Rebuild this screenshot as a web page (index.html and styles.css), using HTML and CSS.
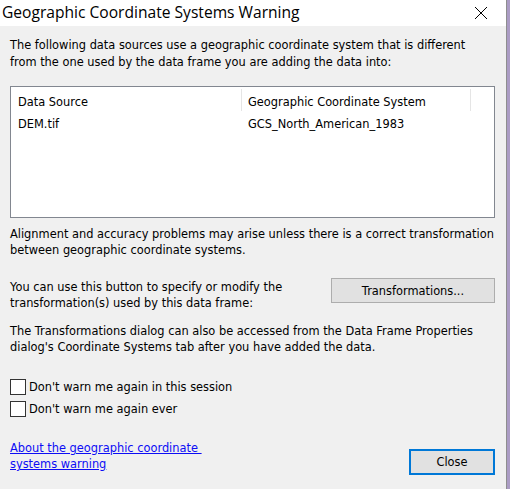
FILE: index.html
```html
<!DOCTYPE html>
<html>
<head>
<meta charset="utf-8">
<link rel="stylesheet" href="styles.css">
</head>
<body>
<div class="window">
  <div class="titlebar">
    <span class="title">Geographic Coordinate Systems Warning</span>
    <svg class="close-x" width="14" height="14" viewBox="0 0 14 14"><path d="M1 1L13 13M13 1L1 13" stroke="#000" stroke-width="1" fill="none"/></svg>
  </div>
  <div class="content">
    <p class="intro">The following data sources use a geographic coordinate system that is different<br>from the one used by the data frame you are adding the data into:</p>
    <div class="listbox">
      <div class="header">
        <div class="col col1">Data Source</div>
        <div class="col col2">Geographic Coordinate System</div>
        <div class="col col3"></div>
      </div>
      <div class="row">
        <div class="col col1">DEM.tif</div>
        <div class="col col2">GCS_North_American_1983</div>
      </div>
    </div>
    <p class="para2">Alignment and accuracy problems may arise unless there is a correct transformation<br>between geographic coordinate systems.</p>
    <div class="transform-row">
      <p>You can use this button to specify or modify the<br>transformation(s) used by this data frame:</p>
      <button class="btn btn-transform">Transformations...</button>
    </div>
    <p class="para4">The Transformations dialog can also be accessed from the Data Frame Properties<br>dialog's Coordinate Systems tab after you have added the data.</p>
    <div class="checks">
      <label class="check"><span class="box"></span>Don't warn me again in this session</label>
      <label class="check"><span class="box"></span>Don't warn me again ever</label>
    </div>
    <div class="footer">
      <a class="link" href="#">About the geographic coordinate&nbsp;<br>systems warning</a>
      <button class="btn btn-close">Close</button>
    </div>
  </div>
</div>
</body>
</html>
```
FILE: styles.css
```css
html, body {
  margin: 0;
  padding: 0;
  background: #ab9cc4;
}
.window {
  width: 506px;
  height: 489px;
  background: #f0f0f0;
  border-right: 1px solid #8e8e8e;
  font-family: Tahoma, "DejaVu Sans", sans-serif;
  font-size: 11.4px;
  color: #000;
  overflow: hidden;
}
.titlebar {
  height: 26px;
  background: #fff;
  display: flex;
  align-items: center;
  justify-content: space-between;
  padding: 0 18px 3px 2px;
  box-sizing: border-box;
}
.title {
  font-family: "Open Sans", "Noto Sans", sans-serif;
  font-size: 15.6px;
  color: #000;
}
.close-x {
  display: block;
  margin-top: 2px;
}
.content {
  padding: 0 11px 0 10px;
}
p {
  margin: 0;
  line-height: 16px;
}
.intro {
  padding-top: 11px;
  line-height: 17px;
}
.listbox {
  margin-top: 15px;
  height: 130px;
  border: 1px solid #828790;
  background: #fff;
}
.header, .row {
  display: flex;
}
.header {
  height: 24px;
  padding-top: 2px;
}
.header .col {
  border-right: 1px solid #e5e5e5;
  line-height: 22px;
  padding-top: 2px;
  height: 20px;
}
.col1 {
  width: 223px;
  padding-left: 7px;
}
.col2 {
  width: 222px;
  padding-left: 6px;
}
.col3 {
  border-right: none !important;
}
.row {
  height: 22px;
  line-height: 22px;
}
.row .col2 {
  padding-left: 7px;
}
.para2 {
  margin-top: 8px;
}
.transform-row {
  display: flex;
  justify-content: space-between;
  align-items: flex-start;
  margin-top: 21px;
}
.transform-row p {
  margin-top: 0;
}
.btn {
  font-family: inherit;
  font-size: 11.4px;
  background: #e1e1e1;
  border: 1px solid #adadad;
  color: #000;
  padding: 0;
  margin: 0;
}
.btn-transform {
  width: 164px;
  height: 25px;
  margin-top: -1px;
}
.para4 {
  margin-top: 12px;
}
.checks {
  margin-top: 24px;
  display: flex;
  flex-direction: column;
  gap: 6px;
}
.check {
  display: flex;
  align-items: center;
  height: 16px;
}
.box {
  width: 14px;
  height: 14px;
  border: 1px solid #333;
  background: #fff;
  margin-right: 3px;
}
.footer {
  margin-top: 23px;
  display: flex;
  justify-content: space-between;
  align-items: flex-start;
}
.link {
  color: #0d0df5;
  text-decoration: underline;
  line-height: 16px;
}
.btn-close {
  width: 86px;
  height: 26px;
  margin-top: 9px;
  border: 2px solid #0078d7;
}
```
